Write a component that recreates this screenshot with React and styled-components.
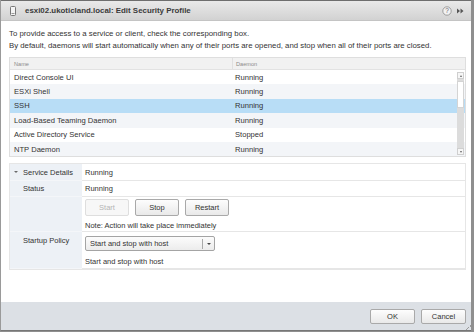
import React from 'react';
import styled, { createGlobalStyle } from 'styled-components';

const Global = createGlobalStyle`
    html, body {
        margin: 0;
        padding: 0;
        background: #8f8f8f;
    }
    body {
        font-family: "Liberation Sans", Arial, sans-serif;
        color: #333;
        overflow: hidden;
    }
`;

const Dialog = styled.div`
    width: 471px;
    height: 331px;
    border-left: 1px solid #9a9a9a;
    border-bottom: 1px solid #777;
    background: #fff;
    display: flex;
    flex-direction: column;
    box-sizing: border-box;
`;

const TitleBar = styled.div`
    height: 21px;
    flex: none;
    display: flex;
    align-items: center;
    padding: 0 6px 0 9px;
    box-sizing: border-box;
    border-top: 1px solid #6e6e6e;
    border-bottom: 1px solid #c4c4c4;
    background: linear-gradient(#e9e9e9, #d2d2d2);
`;

const Title = styled.div`
    flex: 1;
    margin-left: 9px;
    font-size: 7.9px;
    font-weight: bold;
    color: #3a3a3a;
`;

const Body = styled.div`
    flex: 1;
    padding: 7px 9px 0 8px;
`;

const Intro = styled.p`
    margin: 0;
    font-size: 7.8px;
    line-height: 11.5px;
    color: #333;
`;

const Table = styled.div`
    margin-top: 6px;
    width: 455px;
    border: 1px solid #dedede;
    position: relative;
`;

const Row = styled.div`
    display: grid;
    grid-template-columns: 222px 1fr;
    height: ${p => (p.$head ? '11px' : '14.4px')};
    align-items: center;
    font-size: ${p => (p.$head ? '5.6px' : '7.6px')};
    color: ${p => (p.$head ? '#8a8a8a' : '#333')};
    background: ${p => (p.$sel ? '#b8ddf6' : p.$head ? '#f1f1f1' : p.$alt ? '#f3f5f8' : '#fff')};
    border-bottom: ${p => (p.$head ? '1px solid #e2e2e2' : 'none')};
    padding-right: 10px;
`;

const Cell = styled.div`
    padding-left: ${p => (p.$first ? '4px' : '3px')};
    border-left: ${p => (p.$head && !p.$first ? '1px solid #e0e0e0' : 'none')};
    white-space: nowrap;
    height: 100%;
    display: flex;
    align-items: center;
`;

const Scroll = styled.div`
    position: absolute;
    right: 1px;
    top: 14px;
    bottom: 1px;
    width: 7px;
    background: #dcdcdc;
    display: flex;
    flex-direction: column;
    justify-content: space-between;
`;

const ScrollBtn = styled.div`
    height: 7px;
    background: #f6f6f6;
    border: 1px solid #cfcfcf;
    box-sizing: border-box;
    display: flex;
    align-items: center;
    justify-content: center;
    &::after {
        content: '';
        border-left: 1.5px solid transparent;
        border-right: 1.5px solid transparent;
        ${p => (p.$down ? 'border-top: 2px solid #666;' : 'border-bottom: 2px solid #666;')}
    }
`;

const Thumb = styled.div`
    position: absolute;
    left: 0;
    right: 0;
    top: 9px;
    height: 27px;
    background: #fff;
    border: 1px solid #d4d4d4;
    box-sizing: border-box;
`;

const Details = styled.div`
    margin-top: 6px;
    width: 455px;
    display: grid;
    grid-template-columns: 72px 1fr;
    border: 1px solid #e6e6e6;
    font-size: 7.5px;
`;

const Label = styled.div`
    background: #edf1f6;
    height: ${p => p.$h}px;
    box-sizing: border-box;
    padding: ${p => (p.$top ? '4px' : '0')} 0 0 ${p => (p.$indent ? 4 : 13)}px;
    display: flex;
    align-items: ${p => (p.$top ? 'flex-start' : 'center')};
    border-bottom: 1px solid #f4f6f9;
`;

const Value = styled.div`
    height: ${p => p.$h}px;
    box-sizing: border-box;
    padding: ${p => (p.$top ? '2px' : '0')} 0 0 3px;
    display: flex;
    flex-direction: column;
    justify-content: ${p => (p.$top ? 'flex-start' : 'center')};
    border-bottom: 1px solid #e6e6e6;
`;

const Caret = styled.span`
    display: inline-block;
    margin-right: 5px;
    border-left: 2px solid transparent;
    border-right: 2px solid transparent;
    border-top: 2.5px solid #6a6a6a;
`;

const Buttons = styled.div`
    display: flex;
    gap: 6px;
`;

const Btn = styled.button`
    width: ${p => p.$w || 44}px;
    height: ${p => p.$hgt || 17}px;
    padding: 0;
    font-family: inherit;
    font-size: 7.5px;
    color: ${p => (p.disabled ? '#b5b5b5' : '#333')};
    border: 1px solid ${p => (p.disabled ? '#dedede' : '#a9a9a9')};
    border-radius: 2px;
    background: ${p => (p.disabled ? '#f7f7f7' : 'linear-gradient(#fdfdfd, #e9e9e9)')};
`;

const Note = styled.div`
    margin-top: 3px;
    height: 13px;
    line-height: 13px;
`;

const Select = styled.div`
    width: 130px;
    height: 16px;
    border: 1px solid #a4a4a4;
    border-radius: 2px;
    box-sizing: border-box;
    background: linear-gradient(#fcfcfc, #ececec);
    display: flex;
    align-items: center;
    margin-top: 2px;
`;

const SelectText = styled.div`
    flex: 1;
    padding-left: 4px;
`;

const SelectArrow = styled.div`
    width: 11px;
    height: 10px;
    border-left: 1px solid #a9a9a9;
    display: flex;
    align-items: center;
    justify-content: center;
    &::after {
        content: '';
        border-left: 2px solid transparent;
        border-right: 2px solid transparent;
        border-top: 2.5px solid #444;
    }
`;

const SubText = styled.div`
    margin-top: 5px;
    height: 12px;
    line-height: 12px;
`;

const Footer = styled.div`
    height: 28px;
    flex: none;
    background: #dce0e5;
    display: flex;
    justify-content: flex-end;
    align-items: center;
    gap: 6px;
    padding: 0 5px 0 0;
    position: relative;
`;

const Grip = styled.div`
    position: absolute;
    right: 0;
    bottom: 0;
    width: 5px;
    height: 5px;
    background: linear-gradient(135deg, transparent 50%, #9a9a9a 50%, #9a9a9a 60%, transparent 60%);
`;

const rows = [
    ['Direct Console UI', 'Running'],
    ['ESXi Shell', 'Running'],
    ['SSH', 'Running'],
    ['Load-Based Teaming Daemon', 'Running'],
    ['Active Directory Service', 'Stopped'],
    ['NTP Daemon', 'Running']
];

export default function App() {
    return (
        <>
            <Global />
            <Dialog>
                <TitleBar>
                    <svg width="6" height="10" viewBox="0 0 6 10">
                        <rect x="0.5" y="0.5" width="5" height="9" rx="1" fill="#f4f4f4" stroke="#777" />
                        <line x1="1.5" y1="7.5" x2="4.5" y2="7.5" stroke="#999" />
                    </svg>
                    <Title>esxi02.ukoticland.local: Edit Security Profile</Title>
                    <svg width="10" height="10" viewBox="0 0 10 10">
                        <circle cx="5" cy="5" r="4.2" fill="#f2f2f2" stroke="#8a8a8a" strokeWidth="0.8" />
                        <text x="5" y="7.3" fontSize="6.5" textAnchor="middle" fill="#666" fontFamily="Liberation Sans">?</text>
                    </svg>
                    <svg width="9" height="8" viewBox="0 0 9 8" style={{ marginLeft: 4 }}>
                        <path d="M1 1.5 L4 4 L1 6.5 Z M4.5 1.5 L7.5 4 L4.5 6.5 Z" fill="#555" />
                    </svg>
                </TitleBar>
                <Body>
                    <Intro>To provide access to a service or client, check the corresponding box.</Intro>
                    <Intro>By default, daemons will start automatically when any of their ports are opened, and stop when all of their ports are closed.</Intro>
                    <Table>
                        <Row $head>
                            <Cell $first $head>Name</Cell>
                            <Cell $head>Daemon</Cell>
                        </Row>
                        {rows.map(([name, state], i) => (
                            <Row key={name} $alt={i % 2 === 1} $sel={name === 'SSH'}>
                                <Cell $first>{name}</Cell>
                                <Cell>{state}</Cell>
                            </Row>
                        ))}
                        <Scroll>
                            <ScrollBtn />
                            <Thumb />
                            <ScrollBtn $down />
                        </Scroll>
                    </Table>
                    <Details>
                        <Label $h={17} $indent><Caret />Service Details</Label>
                        <Value $h={17}>Running</Value>
                        <Label $h={16}>Status</Label>
                        <Value $h={16}>Running</Value>
                        <Label $h={35} />
                        <Value $h={35} $top>
                            <Buttons>
                                <Btn disabled>Start</Btn>
                                <Btn>Stop</Btn>
                                <Btn>Restart</Btn>
                            </Buttons>
                            <Note>Note: Action will take place immediately</Note>
                        </Value>
                        <Label $h={37} $top>Startup Policy</Label>
                        <Value $h={37} $top>
                            <Select>
                                <SelectText>Start and stop with host</SelectText>
                                <SelectArrow />
                            </Select>
                            <SubText>Start and stop with host</SubText>
                        </Value>
                    </Details>
                </Body>
                <Footer>
                    <Btn $w={45} $hgt={15}>OK</Btn>
                    <Btn $w={45} $hgt={15}>Cancel</Btn>
                    <Grip />
                </Footer>
            </Dialog>
        </>
    );
}
